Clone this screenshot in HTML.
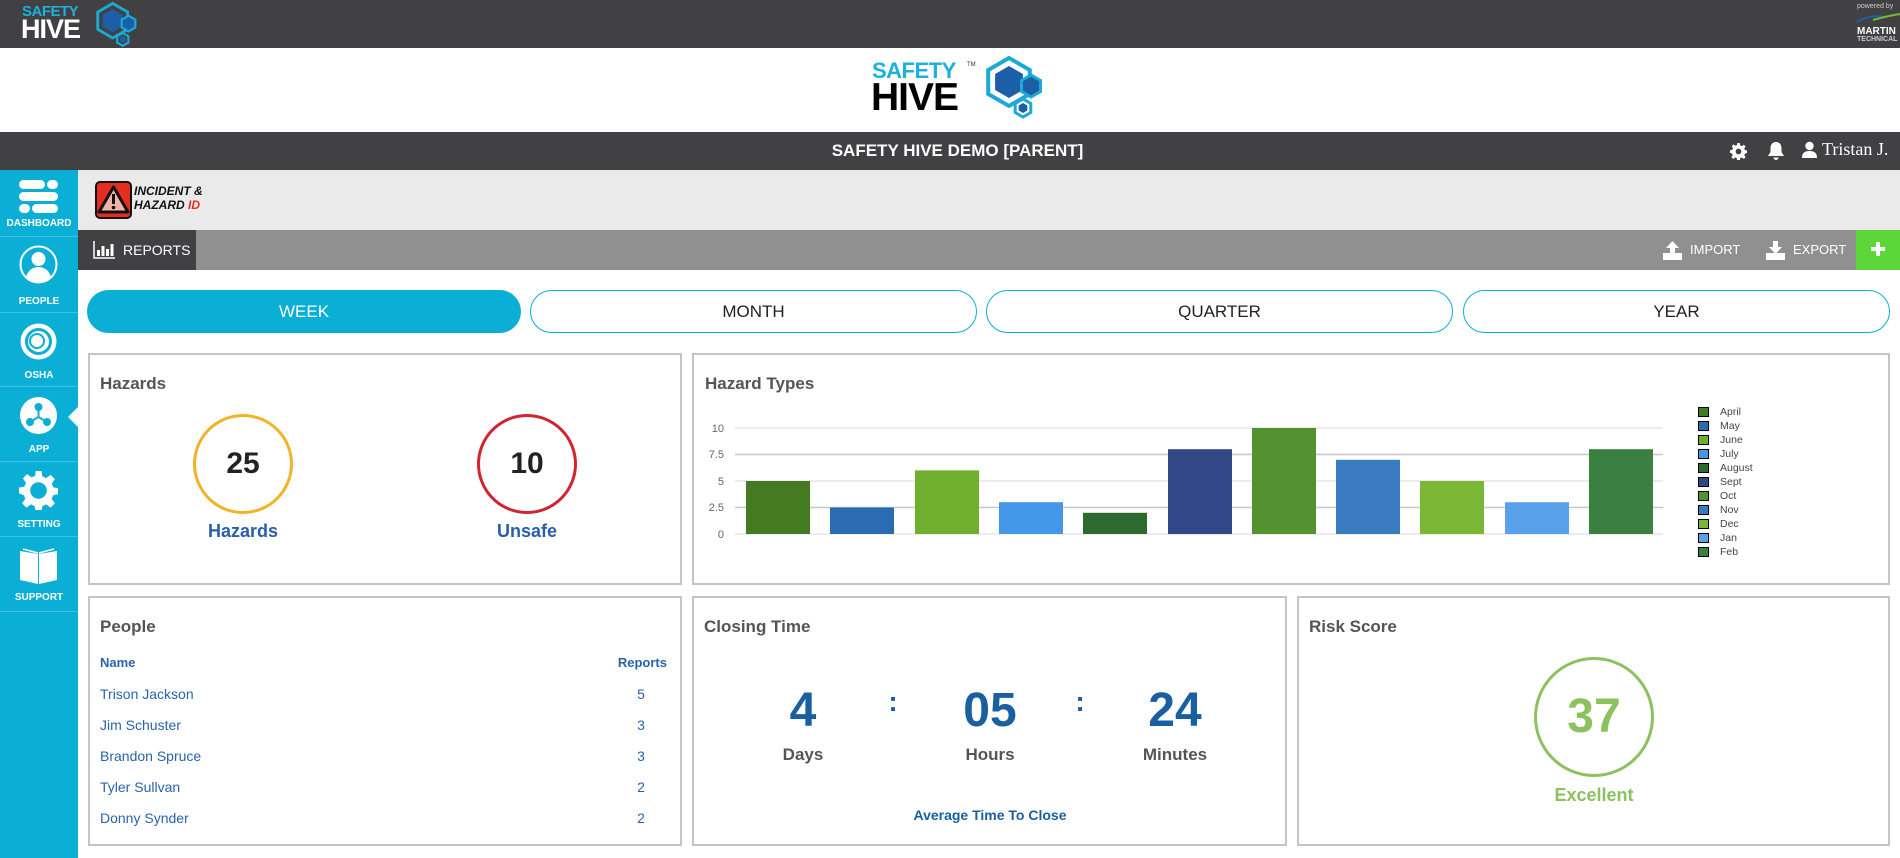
<!DOCTYPE html>
<html><head><meta charset="utf-8">
<style>
*{margin:0;padding:0;box-sizing:border-box}
body{width:1900px;height:858px;position:relative;overflow:hidden;background:#fff;font-family:"Liberation Sans",Arial,sans-serif}
.a{position:absolute}
.panel{position:absolute;border:2px solid #c4c4c4;background:#fff}
.ptitle{position:absolute;font-size:17px;font-weight:bold;color:#555}
.btn{position:absolute;top:290px;height:43px;border:1px solid #0bafd6;border-radius:22px;font-size:17px;color:#222;text-align:center;line-height:41px}
.side{position:absolute;left:0;width:78px;border-bottom:1px solid #3cc2e2;text-align:center;color:#fff;font-size:10px;font-weight:bold}
.side span{position:absolute;left:0;right:0}
.row{position:absolute;left:100px;width:567px;font-size:14px;color:#2a63ad}
.row b{position:absolute;right:-4px;font-weight:normal;width:60px;text-align:center}
</style></head><body>
<div class="a" style="left:0;top:0;width:1900px;height:48px;background:#414143"></div>
<div class="a" style="left:22px;top:4px;font-size:15px;font-weight:900;color:#1bb0dd;letter-spacing:-0.5px;line-height:15px">SAFETY</div>
<div class="a" style="left:21px;top:17px;font-size:27px;font-weight:900;color:#fff;letter-spacing:-1px;line-height:24px">HIVE</div>
<svg class="a" style="left:95px;top:2px" width="44" height="46" viewBox="0 0 60 64"><polygon points="24,2 44.8,14 44.8,38 24,50 3.2,38 3.2,14" fill="none" stroke="#1ba9d6" stroke-width="4"/><polygon points="24,10 37.9,18 37.9,34 24,42 10.1,34 10.1,18" fill="#1d5fa6"/><polygon points="46,19 55.5,24.5 55.5,35.5 46,41 36.5,35.5 36.5,24.5" fill="#1d5fa6" stroke="#1ba9d6" stroke-width="3"/><polygon points="38,43 45.8,47.5 45.8,56.5 38,61 30.2,56.5 30.2,47.5" fill="#414143" stroke="#1ba9d6" stroke-width="3"/><polygon points="38,47 42.3,49.5 42.3,54.5 38,57 33.7,54.5 33.7,49.5" fill="#1d5fa6"/></svg>
<div class="a" style="left:1857px;top:3px;font-size:7px;color:#ccc">powered by</div>
<svg class="a" style="left:1855px;top:12px" width="45" height="12"><path d="M2 10 Q15 2 30 5" stroke="#1d5fa6" stroke-width="2" fill="none"/><path d="M18 8 Q32 4 45 2" stroke="#7ab734" stroke-width="2" fill="none"/></svg>
<div class="a" style="left:1857px;top:26px;font-size:10px;font-weight:bold;color:#fff">MARTIN</div>
<div class="a" style="left:1857px;top:36px;font-size:7px;font-weight:bold;color:#ccc">TECHNICAL</div>
<div class="a" style="left:872px;top:60px;font-size:22px;font-weight:900;color:#1bb0dd;letter-spacing:-0.5px;line-height:22px">SAFETY</div>
<div class="a" style="left:871px;top:81px;font-size:39px;font-weight:900;color:#000;letter-spacing:-1px;line-height:34px">HIVE</div>
<div class="a" style="left:967px;top:62px;font-size:6px;color:#333">TM</div>
<svg class="a" style="left:985px;top:56px" width="60" height="64" viewBox="0 0 60 64"><polygon points="24,2 44.8,14 44.8,38 24,50 3.2,38 3.2,14" fill="none" stroke="#1ba9d6" stroke-width="4"/><polygon points="24,10 37.9,18 37.9,34 24,42 10.1,34 10.1,18" fill="#1d5fa6"/><polygon points="46,19 55.5,24.5 55.5,35.5 46,41 36.5,35.5 36.5,24.5" fill="#1d5fa6" stroke="#1ba9d6" stroke-width="3"/><polygon points="38,43 45.8,47.5 45.8,56.5 38,61 30.2,56.5 30.2,47.5" fill="#fff" stroke="#1ba9d6" stroke-width="3"/><polygon points="38,47 42.3,49.5 42.3,54.5 38,57 33.7,54.5 33.7,49.5" fill="#1d5fa6"/></svg>
<div class="a" style="left:0;top:132px;width:1900px;height:38px;background:#414143"></div>
<div class="a" style="left:0;top:132px;width:1915px;text-align:center;line-height:38px;color:#fff;font-size:17px;font-weight:bold">SAFETY HIVE DEMO [PARENT]</div>
<svg class="a" style="left:1730px;top:143px" width="17" height="17" viewBox="0 0 16 16"><path fill="#fff" d="M6.8 0h2.4l.4 2.2 1.5.7 1.9-1.3 1.7 1.7-1.3 1.9.7 1.5 2.2.4v2.4l-2.2.4-.7 1.5 1.3 1.9-1.7 1.7-1.9-1.3-1.5.7-.4 2.2H6.8l-.4-2.2-1.5-.7-1.9 1.3-1.7-1.7 1.3-1.9-.7-1.5L0 9.2V6.8l2.2-.4.7-1.5-1.3-1.9 1.7-1.7 1.9 1.3 1.5-.7zM8 5.3A2.7 2.7 0 1 0 8 10.7 2.7 2.7 0 1 0 8 5.3z"/></svg>
<svg class="a" style="left:1767px;top:141px" width="18" height="20" viewBox="0 0 18 20"><path fill="#fff" d="M9 1c-3.5 0-5.5 2.5-5.5 6v4L1 15h16l-2.5-4V7C14.5 3.5 12.5 1 9 1zM6.5 16.5a2.5 2.5 0 0 0 5 0z"/></svg>
<svg class="a" style="left:1802px;top:141px" width="15" height="18" viewBox="0 0 15 18"><circle cx="7.5" cy="5" r="4.2" fill="#fff"/><path fill="#fff" d="M0 17c0-5 2.5-7 7.5-7s7.5 2 7.5 7z"/></svg>
<div class="a" style="left:1822px;top:139px;font-family:'Liberation Serif',serif;font-size:18px;color:#fff">Tristan J.</div>
<div class="a" style="left:0;top:170px;width:78px;height:688px;background:#0bafd6"></div>
<div class="side" style="top:170px;height:67px"><svg class="a" style="left:19px;top:10px" width="39" height="34"><rect x="0" y="0" width="26" height="9" rx="4.5" fill="#fff"/><rect x="28" y="0" width="11" height="9" rx="4.5" fill="#fff"/><rect x="0" y="12" width="39" height="9" rx="4.5" fill="#fff"/><rect x="0" y="24" width="11" height="9" rx="4.5" fill="#fff"/><rect x="13" y="24" width="26" height="9" rx="4.5" fill="#fff"/></svg><span style="top:48px">DASHBOARD</span></div>
<div class="side" style="top:237px;height:76px"><svg class="a" style="left:19px;top:8px" width="39" height="39"><circle cx="19.5" cy="19.5" r="18" fill="none" stroke="#fff" stroke-width="2"/><circle cx="19.5" cy="14" r="7" fill="#fff"/><path d="M7 32c2-7 7-10 12.5-10s10.5 3 12.5 10a18 18 0 0 1-25 0z" fill="#fff"/></svg><span style="top:59px">PEOPLE</span></div>
<div class="side" style="top:313px;height:74px"><svg class="a" style="left:19px;top:9px" width="39" height="39"><circle cx="19.5" cy="19.5" r="18" fill="#fff"/><circle cx="19.5" cy="19.5" r="12" fill="none" stroke="#0bafd6" stroke-width="3"/><circle cx="18" cy="19" r="7" fill="none" stroke="#0bafd6" stroke-width="2"/></svg><span style="top:57px">OSHA</span></div>
<div class="side" style="top:387px;height:75px"><svg class="a" style="left:19px;top:9px" width="39" height="39"><circle cx="19.5" cy="19.5" r="18.5" fill="#fff"/><circle cx="19.5" cy="11" r="4" fill="#0bafd6"/><circle cx="11" cy="26" r="4" fill="#0bafd6"/><circle cx="28" cy="26" r="4" fill="#0bafd6"/><path d="M19.5 11v10M19.5 21L11 26M19.5 21L28 26" stroke="#0bafd6" stroke-width="2"/></svg><span style="top:57px">APP</span></div>
<div class="a" style="left:68px;top:407px;width:0;height:0;border-top:10px solid transparent;border-bottom:10px solid transparent;border-right:10px solid #fff"></div>
<div class="side" style="top:462px;height:75px"><svg class="a" style="left:19px;top:9px" width="39" height="39" viewBox="0 0 16 16"><path fill="#fff" d="M6.8 0h2.4l.4 2.2 1.5.7 1.9-1.3 1.7 1.7-1.3 1.9.7 1.5 2.2.4v2.4l-2.2.4-.7 1.5 1.3 1.9-1.7 1.7-1.9-1.3-1.5.7-.4 2.2H6.8l-.4-2.2-1.5-.7-1.9 1.3-1.7-1.7 1.3-1.9-.7-1.5L0 9.2V6.8l2.2-.4.7-1.5-1.3-1.9 1.7-1.7 1.9 1.3 1.5-.7zM8 4.6A3.4 3.4 0 1 0 8 11.4 3.4 3.4 0 1 0 8 4.6z"/></svg><span style="top:57px">SETTING</span></div>
<div class="side" style="top:537px;height:75px"><svg class="a" style="left:19px;top:10px" width="39" height="38"><path d="M1 4l18 3v30L1 33z" fill="#fff"/><path d="M38 4L20 7v30l18-4z" fill="#fff"/><path d="M4 2l15 4M35 2L20 6" stroke="#fff" stroke-width="1.5"/></svg><span style="top:55px">SUPPORT</span></div>
<div class="a" style="left:78px;top:170px;width:1822px;height:60px;background:#eaeaea"></div>
<svg class="a" style="left:95px;top:181px" width="37" height="38" viewBox="0 0 37 38"><rect x="1" y="1" width="35" height="36" rx="4" fill="#e42d1f" stroke="#111" stroke-width="2"/><path d="M18.5 6L33 31H4z" fill="#f4b3a9" stroke="#111" stroke-width="3" stroke-linejoin="round"/><rect x="17" y="13" width="3" height="10" fill="#111"/><circle cx="18.5" cy="26.5" r="1.8" fill="#111"/></svg>
<div class="a" style="left:134px;top:184px;font-size:12px;font-weight:900;font-style:italic;color:#111;line-height:14px">INCIDENT &amp;<br>HAZARD <span style="color:#e42d1f">ID</span></div>
<div class="a" style="left:78px;top:230px;width:1822px;height:40px;background:#909090"></div>
<div class="a" style="left:78px;top:230px;width:118px;height:40px;background:#414143"></div>
<svg class="a" style="left:93px;top:241px" width="22" height="18"><path d="M1 0v17h21" stroke="#fff" stroke-width="1.5" fill="none"/><rect x="4" y="9" width="3" height="6" fill="#fff"/><rect x="8.5" y="5" width="3" height="10" fill="#fff"/><rect x="13" y="8" width="3" height="7" fill="#fff"/><rect x="17.5" y="3" width="3" height="12" fill="#fff"/></svg>
<div class="a" style="left:123px;top:230px;line-height:40px;font-size:14px;color:#fff">REPORTS</div>
<svg class="a" style="left:1663px;top:241px" width="19" height="19"><rect x="0" y="12" width="19" height="7" fill="#fff"/><path d="M9.5 0L16 7h-4v6H7V7H3z" fill="#fff"/></svg>
<div class="a" style="left:1690px;top:230px;line-height:40px;font-size:13px;color:#fff">IMPORT</div>
<svg class="a" style="left:1766px;top:241px" width="19" height="19"><rect x="0" y="12" width="19" height="7" fill="#fff"/><path d="M7 0h5v6h4l-6.5 7L3 6h4z" fill="#fff"/></svg>
<div class="a" style="left:1793px;top:230px;line-height:40px;font-size:13px;color:#fff">EXPORT</div>
<div class="a" style="left:1856px;top:230px;width:44px;height:40px;background:#5dd63a"></div>
<div class="a" style="left:1871px;top:247px;width:14px;height:4px;background:#fff"></div>
<div class="a" style="left:1876px;top:242px;width:4px;height:14px;background:#fff"></div>
<div class="btn" style="left:87px;width:434px;background:#0bafd6;color:#fff">WEEK</div>
<div class="btn" style="left:530px;width:447px">MONTH</div>
<div class="btn" style="left:986px;width:467px">QUARTER</div>
<div class="btn" style="left:1463px;width:427px">YEAR</div>
<div class="panel" style="left:88px;top:353px;width:594px;height:232px"></div>
<div class="ptitle" style="left:100px;top:374px">Hazards</div>
<div class="a" style="left:193px;top:414px;width:100px;height:100px;border:3px solid #f0b429;border-radius:50%;text-align:center;line-height:94px;font-size:30px;font-weight:bold;color:#222">25</div>
<div class="a" style="left:477px;top:414px;width:100px;height:100px;border:3px solid #d0252f;border-radius:50%;text-align:center;line-height:94px;font-size:30px;font-weight:bold;color:#222">10</div>
<div class="a" style="left:143px;top:521px;width:200px;text-align:center;font-size:18px;font-weight:bold;color:#2a5fa8">Hazards</div>
<div class="a" style="left:427px;top:521px;width:200px;text-align:center;font-size:18px;font-weight:bold;color:#2a5fa8">Unsafe</div>
<div class="panel" style="left:692px;top:353px;width:1198px;height:232px"></div>
<div class="ptitle" style="left:705px;top:374px">Hazard Types</div>
<svg class="a" style="left:0;top:0" width="1900" height="600" font-family="Liberation Sans, Arial, sans-serif">
<g stroke-width="1.5"><line x1="735" y1="428" x2="1663" y2="428" stroke="#e6e6e6"/><line x1="735" y1="454.5" x2="1663" y2="454.5" stroke="#c8c8c8"/><line x1="735" y1="481" x2="1663" y2="481" stroke="#e6e6e6"/><line x1="735" y1="507.5" x2="1663" y2="507.5" stroke="#c8c8c8"/><line x1="735" y1="534" x2="1663" y2="534" stroke="#e6e6e6"/></g>
<g font-size="11" fill="#666" text-anchor="end"><text x="724" y="432">10</text><text x="724" y="458">7.5</text><text x="724" y="485">5</text><text x="724" y="511">2.5</text><text x="724" y="538">0</text></g>
<rect x="746" y="481" width="64" height="53" fill="#437a22"/>
<rect x="830" y="507.5" width="64" height="26.5" fill="#2a6bb1"/>
<rect x="915" y="470.4" width="64" height="63.6" fill="#6fae2f"/>
<rect x="999" y="502.2" width="64" height="31.8" fill="#4497e9"/>
<rect x="1083" y="512.8" width="64" height="21.2" fill="#2c6a2f"/>
<rect x="1168" y="449.2" width="64" height="84.8" fill="#324886"/>
<rect x="1252" y="428" width="64" height="106" fill="#549130"/>
<rect x="1336" y="459.8" width="64" height="74.2" fill="#3a7bc0"/>
<rect x="1420" y="481" width="64" height="53" fill="#7ab734"/>
<rect x="1505" y="502.2" width="64" height="31.8" fill="#59a1ea"/>
<rect x="1589" y="449.2" width="64" height="84.8" fill="#3a8040"/>
<g stroke="#000" stroke-width="1"><rect x="1698.5" y="407.5" width="10" height="9" fill="#437a22"/><rect x="1698.5" y="421.5" width="10" height="9" fill="#2a6bb1"/><rect x="1698.5" y="435.5" width="10" height="9" fill="#6fae2f"/><rect x="1698.5" y="449.5" width="10" height="9" fill="#4497e9"/><rect x="1698.5" y="463.5" width="10" height="9" fill="#2c6a2f"/><rect x="1698.5" y="477.5" width="10" height="9" fill="#324886"/><rect x="1698.5" y="491.5" width="10" height="9" fill="#549130"/><rect x="1698.5" y="505.5" width="10" height="9" fill="#3a7bc0"/><rect x="1698.5" y="519.5" width="10" height="9" fill="#7ab734"/><rect x="1698.5" y="533.5" width="10" height="9" fill="#59a1ea"/><rect x="1698.5" y="547.5" width="10" height="9" fill="#3a8040"/></g>
<g font-size="10.5" fill="#444"><text x="1720" y="415">April</text><text x="1720" y="429">May</text><text x="1720" y="443">June</text><text x="1720" y="457">July</text><text x="1720" y="471">August</text><text x="1720" y="485">Sept</text><text x="1720" y="499">Oct</text><text x="1720" y="513">Nov</text><text x="1720" y="527">Dec</text><text x="1720" y="541">Jan</text><text x="1720" y="555">Feb</text></g>
</svg>
<div class="panel" style="left:88px;top:596px;width:594px;height:250px"></div>
<div class="ptitle" style="left:100px;top:617px">People</div>
<div class="row" style="top:655px;font-weight:bold;font-size:13px">Name<b style="font-weight:bold;right:0;width:auto">Reports</b></div>
<div class="row" style="top:686px">Trison Jackson<b>5</b></div>
<div class="row" style="top:717px">Jim Schuster<b>3</b></div>
<div class="row" style="top:748px">Brandon Spruce<b>3</b></div>
<div class="row" style="top:779px">Tyler Sullvan<b>2</b></div>
<div class="row" style="top:810px">Donny Synder<b>2</b></div>
<div class="panel" style="left:692px;top:596px;width:595px;height:250px"></div>
<div class="ptitle" style="left:704px;top:617px">Closing Time</div>
<div class="a" style="left:743px;top:683px;width:120px;text-align:center;font-size:48px;font-weight:bold;color:#1a5fa0">4</div>
<div class="a" style="left:930px;top:683px;width:120px;text-align:center;font-size:48px;font-weight:bold;color:#1a5fa0">05</div>
<div class="a" style="left:1115px;top:683px;width:120px;text-align:center;font-size:48px;font-weight:bold;color:#1a5fa0">24</div>
<div class="a" style="left:883px;top:686px;width:20px;text-align:center;font-size:28px;font-weight:bold;color:#1a5fa0">:</div>
<div class="a" style="left:1070px;top:686px;width:20px;text-align:center;font-size:28px;font-weight:bold;color:#1a5fa0">:</div>
<div class="a" style="left:743px;top:745px;width:120px;text-align:center;font-size:17px;font-weight:bold;color:#555">Days</div>
<div class="a" style="left:930px;top:745px;width:120px;text-align:center;font-size:17px;font-weight:bold;color:#555">Hours</div>
<div class="a" style="left:1115px;top:745px;width:120px;text-align:center;font-size:17px;font-weight:bold;color:#555">Minutes</div>
<div class="a" style="left:890px;top:807px;width:200px;text-align:center;font-size:14px;font-weight:bold;color:#1a5fa0">Average Time To Close</div>
<div class="panel" style="left:1297px;top:596px;width:593px;height:250px"></div>
<div class="ptitle" style="left:1309px;top:617px">Risk Score</div>
<div class="a" style="left:1534px;top:657px;width:120px;height:120px;border:3px solid #8cc160;border-radius:50%;text-align:center;line-height:114px;font-size:48px;font-weight:bold;color:#8cc160">37</div>
<div class="a" style="left:1494px;top:785px;width:200px;text-align:center;font-size:18px;font-weight:bold;color:#8cc160">Excellent</div>
</body></html>
